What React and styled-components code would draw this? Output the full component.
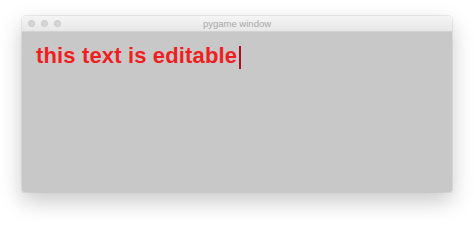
import React from 'react';
import styled, { createGlobalStyle } from 'styled-components';

const GlobalStyle = createGlobalStyle`
  html, body {
    margin: 0;
    padding: 0;
    background: #ffffff;
  }
  body {
    font-family: "Liberation Sans", Arial, sans-serif;
  }
`;

const Page = styled.div`
  width: 474px;
  height: 220px;
  box-sizing: border-box;
  padding: 16px 22px 0 22px;
`;

const Window = styled.div`
  width: 430px;
  height: 176px;
  display: flex;
  flex-direction: column;
  border-radius: 4px 4px 2px 2px;
  overflow: hidden;
  box-shadow: 0 0 0 1px rgba(0, 0, 0, 0.07), 0 9px 22px rgba(0, 0, 0, 0.22);
`;

const TitleBar = styled.div`
  position: relative;
  height: 15px;
  flex-shrink: 0;
  display: flex;
  align-items: center;
  justify-content: center;
  background: linear-gradient(#f5f5f5, #e7e7e7);
  border-bottom: 1px solid #d2d2d2;
`;

const Lights = styled.div`
  position: absolute;
  left: 6px;
  top: 4px;
  display: flex;
  gap: 6px;
`;

const Light = styled.span`
  width: 7px;
  height: 7px;
  border-radius: 50%;
  box-sizing: border-box;
  background: #d6d6d6;
  border: 1px solid #c6c6c6;
`;

const Title = styled.span`
  font-family: "Liberation Sans", Arial, sans-serif;
  font-size: 9.5px;
  color: #a8a8a8;
`;

const Surface = styled.div`
  flex: 1;
  background: #c8c8c8;
  padding: 13px 14px;
`;

const Editable = styled.div`
  font-family: "Liberation Sans", Arial, sans-serif;
  font-weight: bold;
  font-size: 22px;
  line-height: 22px;
  letter-spacing: 0.15px;
  color: #f01f1f;
  white-space: nowrap;
`;

const Caret = styled.span`
  display: inline-block;
  width: 2px;
  height: 23px;
  margin-left: 2px;
  vertical-align: -6px;
  background: #a8101a;
`;

export default function App() {
  return (
    <>
      <GlobalStyle />
      <Page>
        <Window>
          <TitleBar>
            <Lights>
              <Light />
              <Light />
              <Light />
            </Lights>
            <Title>pygame window</Title>
          </TitleBar>
          <Surface>
            <Editable>
              this text is editable
              <Caret />
            </Editable>
          </Surface>
        </Window>
      </Page>
    </>
  );
}
